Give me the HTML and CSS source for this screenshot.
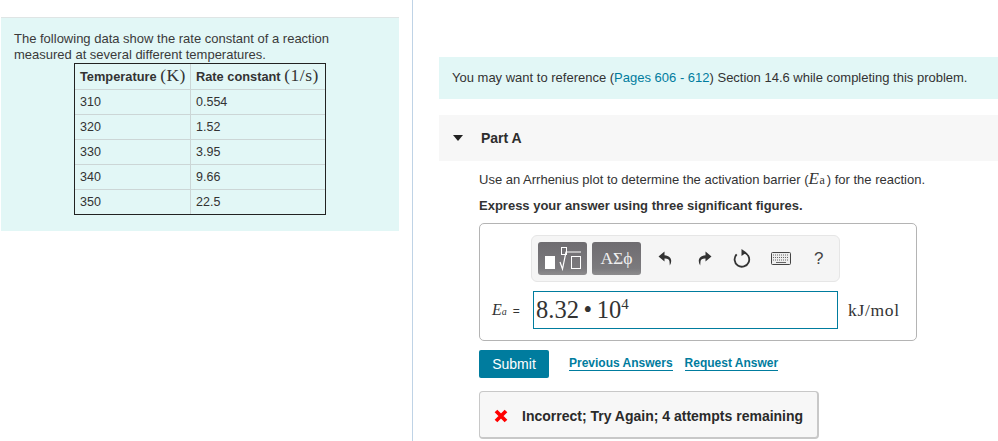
FILE: index.html
```html
<!DOCTYPE html>
<html lang="en">
<head>
<meta charset="utf-8">
<title>Arrhenius problem</title>
<link rel="stylesheet" href="styles.css">
</head>
<body>
<div class="page">
  <aside class="left">
    <div class="data-panel">
      <p class="intro">The following data show the rate constant of a reaction measured at several different temperatures.</p>
      <table class="data">
        <tr><th class="c1">Temperature <span class="math">(K)</span></th><th class="c2">Rate constant <span class="math">(1/s)</span></th></tr>
        <tr><td>310</td><td>0.554</td></tr>
        <tr><td>320</td><td>1.52</td></tr>
        <tr><td>330</td><td>3.95</td></tr>
        <tr><td>340</td><td>9.66</td></tr>
        <tr><td>350</td><td>22.5</td></tr>
      </table>
    </div>
  </aside>
  <main class="right">
    <div class="notice">You may want to reference (<a class="pages">Pages 606 - 612</a>) Section 14.6 while completing this problem.</div>
    <div class="part-head"><span class="caret"></span><span class="part-title">Part A</span></div>
    <div class="part-body">
      <p class="q">Use an Arrhenius plot to determine the activation barrier (<i class="math ea">E</i><span class="math sub">a</span>) for the reaction.</p>
      <p class="express">Express your answer using three significant figures.</p>
      <div class="answer-box">
        <div class="toolbar">
          <span class="tbtn t1">
            <svg width="49" height="33" viewBox="0 0 49 33"><rect x="7" y="14" width="10" height="13" fill="#fff"/><rect x="23.500" y="5.500" width="5" height="7" fill="none" stroke="#fff"/><path d="M22 20l2.500 7 3.500-17h15" fill="none" stroke="#fff" stroke-width="1.200"/><rect x="33.500" y="14.500" width="9" height="12" fill="none" stroke="#fff"/></svg>
          </span>
          <span class="tbtn t2">ΑΣϕ</span>
          <svg class="ti i-undo" width="15" height="15" viewBox="0 0 15 15"><path d="M6.500 0.500L0.500 5.500l6 5V7.500c3-.2 4.800 1 5 3l.3 4c2.800-4.500 1.700-9.500-5.300-10.300z" fill="#333"/></svg>
          <svg class="ti i-redo" width="15" height="15" viewBox="0 0 15 15"><path d="M8.500 0.500L14.500 5.500l-6 5V7.500c-3-.2-4.800 1-5 3l-.3 4C.4 10 1.500 5 8.500 4.200z" fill="#333"/></svg>
          <svg class="ti i-reset" width="18" height="19" viewBox="0 0 18 19"><path d="M10.500 3.300a7.300 7.300 0 1 1-6.800 2" fill="none" stroke="#333" stroke-width="1.800"/><path d="M8.500 0l5 3.500-5 3.500z" fill="#333"/></svg>
          <svg class="ti i-kbd" width="20" height="13" viewBox="0 0 20 13"><rect x="0.500" y="0.500" width="19" height="12" rx="1" fill="#eee" stroke="#444"/><path d="M2 3h16M2 5.500h16M2 8h16" stroke="#666" stroke-dasharray="1 1"/><path d="M5 10.500h10" stroke="#666"/></svg>
          <span class="help">?</span>
        </div>
        <div class="entry">
          <span class="lhs"><i>E</i><i class="lhs-sub">a</i> <span class="eq">=</span></span>
          <div class="field">8.32 • 10<sup>4</sup></div>
          <span class="unit">kJ/mol</span>
        </div>
      </div>
      <div class="actions">
        <span class="submit">Submit</span>
        <a class="link l1">Previous Answers</a>
        <a class="link">Request Answer</a>
      </div>
      <div class="feedback">
        <svg width="14" height="14" viewBox="0 0 14 14"><path d="M2 2l10 10M12 2L2 12" stroke="#f00" stroke-width="3.800"/></svg>
        <span>Incorrect; Try Again; 4 attempts remaining</span>
      </div>
    </div>
  </main>
</div>
</body>
</html>
```
FILE: styles.css
```css
* { box-sizing: border-box; }
html, body { margin: 0; padding: 0; background: #fff; }
body { font-family: "Liberation Sans", Arial, sans-serif; color: #333; overflow: hidden; }
p { margin: 0; }
.page { display: flex; width: 998px; height: 441px; overflow: hidden; }
.left { width: 413px; flex: none; border-right: 1px solid #bfd3e6; padding: 17px 0 0 1px; }
.data-panel { width: 398px; height: 214px; background: #e2f7f6; border-top: 1px solid #dfe5e5; padding: 13px 0 0 13px; }
.intro { font-size: 13px; line-height: 16px; width: 330px; color: #3a3a3a; }
.data { border-collapse: collapse; margin-left: 60px; width: 252px; height: 152px; font-size: 12.500px; table-layout: fixed; outline: 1px solid #222; outline-offset: -1px; }
.data th, .data td { border: 1px solid #ccd6d6; padding: 0 0 0 5px; text-align: left; font-weight: 400; height: 25px; }
.data tr:first-child th { font-weight: 700; height: 26px; font-size: 12.800px; padding-bottom: 2px; white-space: nowrap; }
.data .c1 { width: 116px; }
.math { font-family: "Liberation Serif", serif; font-weight: 400; font-size: 17.500px; line-height: 1; letter-spacing: .5px; }
.right { flex: 1; padding: 57px 0 0 26px; min-width: 0; }
.notice { height: 42px; background: #e2f7f6; padding-left: 13px; line-height: 41px; font-size: 13px; }
.pages { color: #007c9e; }
.part-head { height: 46px; margin-top: 16px; background: #f7f7f7; display: flex; align-items: center; padding-left: 14px; }
.caret { width: 0; height: 0; border-left: 5px solid transparent; border-right: 5px solid transparent; border-top: 6px solid #222; }
.part-title { margin-left: 18px; font-weight: 700; font-size: 14px; color: #2d2d2d; }
.part-body { padding: 0 0 0 40px; }
.q { margin-top: 9px; font-size: 13px; line-height: 20px; }
.q .ea { font-size: 17px; letter-spacing: .5px; }
.q .sub { font-size: 12px; letter-spacing: 0; margin-right: 2px; }
.express { margin-top: 6px; font-size: 13px; line-height: 20px; font-weight: 700; }
.answer-box { margin-top: 7px; width: 438px; height: 118px; border: 1px solid #b4b4b4; border-radius: 5px; padding: 11px 11px 0 12px; }
.toolbar { width: 309px; height: 47px; margin-left: 39px; background: #f5f5f5; border: 1px solid #e6e6e6; border-radius: 6px; display: flex; align-items: center; padding-left: 6px; }
.tbtn { height: 33px; border-radius: 3px; background: linear-gradient(#6e6c70, #7b7a7d 80%, #8d8c8e); color: #f0f0f0; display: flex; align-items: center; justify-content: center; flex: none; }
.t1 { width: 49px; }
.t2 { width: 49px; margin-left: 5px; font-family: "Liberation Serif", serif; font-size: 17.500px; }
.ti { flex: none; }
.i-undo { margin-left: 17px; }
.i-redo { margin-left: 24px; }
.i-reset { margin-left: 21px; }
.i-kbd { margin-left: 20px; }
.help { margin-left: 23px; font-size: 17px; color: #444; }
.entry { display: flex; align-items: center; margin-top: 9px; height: 38px; }
.lhs { width: 41px; font-family: "Liberation Serif", serif; font-size: 16px; flex: none; }
.lhs-sub { font-size: 10px; }
.eq { font-family: "Liberation Sans", sans-serif; font-size: 12px; margin-left: 2px; }
.field { width: 305px; height: 38px; flex: none; border: 1px solid #007c9e; font-family: "Liberation Serif", serif; font-size: 24.500px; line-height: 36px; padding-left: 2px; color: #333; word-spacing: -1.500px; }
.field sup { font-size: 15px; line-height: 0; vertical-align: 9px; }
.unit { margin-left: 10px; font-family: "Liberation Serif", serif; font-size: 17.500px; letter-spacing: .7px; }
.actions { margin-top: 9px; display: flex; align-items: center; height: 28px; }
.submit { width: 70px; height: 28px; background: #007c9e; color: #fff; border-radius: 2px; font-size: 14px; font-weight: 400; text-align: center; line-height: 28px; }
.link { color: #007c9e; font-weight: 700; font-size: 12px; border-bottom: 1px solid #007c9e; line-height: 13px; margin-left: 12px; }
.l1 { margin-left: 20px; }
.feedback { margin-top: 13px; width: 340px; height: 48px; background: #f7f7f7; border: 1px solid #c8c8c8; border-right-width: 2px; border-bottom-width: 2px; border-radius: 4px; display: flex; align-items: center; padding: 2px 0 0 14px; font-weight: 700; font-size: 14px; color: #2a2a2a; }
.feedback span { margin-left: 14px; }
```
